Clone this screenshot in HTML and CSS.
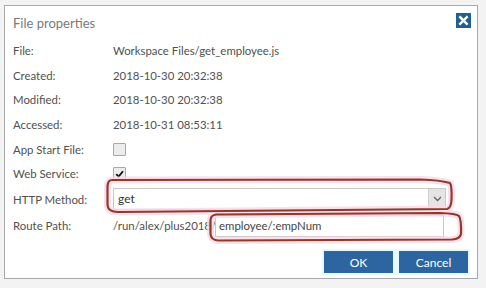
FILE: index.html
```html
<!DOCTYPE html>
<html>
<head>
<meta charset="utf-8">
<link rel="stylesheet" href="styles.css">
</head>
<body>
<div class="dialog">
  <div class="header">
    <span class="title">File properties</span>
    <span class="close"><svg width="15" height="15" viewBox="0 0 15 15"><path d="M4.2 4.2 L10.8 10.8 M10.8 4.2 L4.2 10.8" stroke="#fff" stroke-width="2.4" stroke-linecap="square"/></svg></span>
  </div>
  <div class="rows">
    <div class="row"><span class="label">File:</span><span class="value">Workspace Files/get_employee.js</span></div>
    <div class="row"><span class="label">Created:</span><span class="value">2018-10-30 20:32:38</span></div>
    <div class="row"><span class="label">Modified:</span><span class="value">2018-10-30 20:32:38</span></div>
    <div class="row"><span class="label">Accessed:</span><span class="value">2018-10-31 08:53:11</span></div>
    <div class="row"><span class="label">App Start File:</span><span class="value"><span class="check"></span></span></div>
    <div class="row"><span class="label">Web Service:</span><span class="value"><span class="check checked"><svg width="12" height="12" viewBox="0 0 12 12"><path d="M2.5 6.2 L5 8.8 L9.8 3" stroke="#111" stroke-width="2" fill="none"/></svg></span></span></div>
    <div class="row row-select"><span class="label">HTTP Method:</span>
      <div class="select"><span class="select-text">get</span><span class="arrow"><svg width="9" height="6" viewBox="0 0 9 6"><path d="M1 1 L4.5 4.5 L8 1" stroke="#666" stroke-width="1.3" fill="none"/></svg></span></div>
    </div>
    <div class="row row-route"><span class="label">Route Path:</span>
      <span class="prefix">/run/alex/plus2018/</span>
      <div class="input">employee/:empNum</div>
    </div>
  </div>
  <div class="footer">
    <div class="buttons">
      <span class="btn">OK</span>
      <span class="btn">Cancel</span>
    </div>
  </div>
</div>
<svg class="marks" width="486" height="288" viewBox="0 0 486 288">
  <g fill="none" stroke="#fbd9e8" stroke-width="7" stroke-linejoin="round" stroke-linecap="round" opacity="0.8">
    <path d="M112 180 L420 179.5 Q440 180 450 183 Q452 186 451.5 200 Q451 208 447 209 L118 212 Q108 212 107.5 205 L107.5 186 Q108 180 112 180"/>
    <path d="M216 214.5 L440 213 Q456 213.5 459 216 Q461.5 220 461 234 Q460 239 452 239.5 L218 240.5 Q211 240 210.5 234 L210.5 220 Q211 215 216 214.5"/>
  </g>
  <g fill="none" stroke="#8b3b2c" stroke-width="2.2" stroke-linejoin="round" stroke-linecap="round">
    <path d="M112 180 L420 179.5 Q440 180 450 183 Q452 186 451.5 200 Q451 208 447 209 L118 212 Q108 212 107.5 205 L107.5 186 Q108 180 112 180"/>
    <path d="M216 214.5 L440 213 Q456 213.5 459 216 Q461.5 220 461 234 Q460 239 452 239.5 L218 240.5 Q211 240 210.5 234 L210.5 220 Q211 215 216 214.5"/>
  </g>
</svg>
</body>
</html>
```
FILE: styles.css
```css
html, body {
  margin: 0;
  padding: 0;
}
body {
  width: 486px;
  height: 288px;
  background: #f3f3f3;
  font-family: "Lato", "Open Sans", sans-serif;
  position: relative;
  overflow: hidden;
}
.dialog {
  position: absolute;
  left: 4px;
  top: 5px;
  width: 472px;
  height: 272px;
  background: #fff;
  border: 1px solid #a9a9a9;
  display: flex;
  flex-direction: column;
}
.header {
  height: 32px;
  display: flex;
  align-items: center;
  justify-content: space-between;
  padding: 0 6px 0 8px;
}
.title {
  font-size: 13px;
  color: #7a7a7a;
  margin-top: 1px;
}
.close {
  width: 15px;
  height: 15px;
  background: #1f5f93;
  display: flex;
  margin-top: -4px;
}
.rows {
  display: flex;
  flex-direction: column;
  padding-left: 8px;
}
.row {
  height: 24.7px;
  display: flex;
  align-items: center;
  font-size: 11.4px;
  color: #505050;
}
.label {
  width: 100px;
  flex: none;
}
.value {
  display: flex;
  align-items: center;
}
.check {
  width: 11px;
  height: 11px;
  border: 1px solid #a8a8a8;
  background: #ececec;
  border-radius: 1px;
  display: flex;
}
.row-select {
  height: 26px;
}
.select {
  width: 331px;
  height: 20px;
  border: 1px solid #c8c8c8;
  display: flex;
  align-items: center;
  justify-content: space-between;
  margin-top: -1px;
}
.select-text {
  padding-left: 4px;
  color: #333;
  font-size: 12px;
}
.arrow {
  width: 16px;
  height: 20px;
  background: #e4e4e4;
  border-left: 1px solid #d0d0d0;
  display: flex;
  align-items: center;
  justify-content: center;
}
.row-route {
  height: 27px;
}
.prefix {
  width: 102px;
  flex: none;
}
.input {
  width: 224px;
  height: 20px;
  border: 1px solid #c8c8c8;
  display: flex;
  align-items: center;
  padding-left: 3px;
  color: #444;
}
.footer {
  display: flex;
  justify-content: flex-end;
  padding: 12px 9px 0 0;
}
.buttons {
  display: flex;
  gap: 6px;
  background: #e6f9fd;
  padding: 2px;
  margin: -2px;
}
.btn {
  width: 69px;
  height: 22px;
  background: #2d65a0;
  color: #fff;
  font-size: 12px;
  display: flex;
  align-items: center;
  justify-content: center;
}
.marks {
  position: absolute;
  left: 0;
  top: 0;
}
```
